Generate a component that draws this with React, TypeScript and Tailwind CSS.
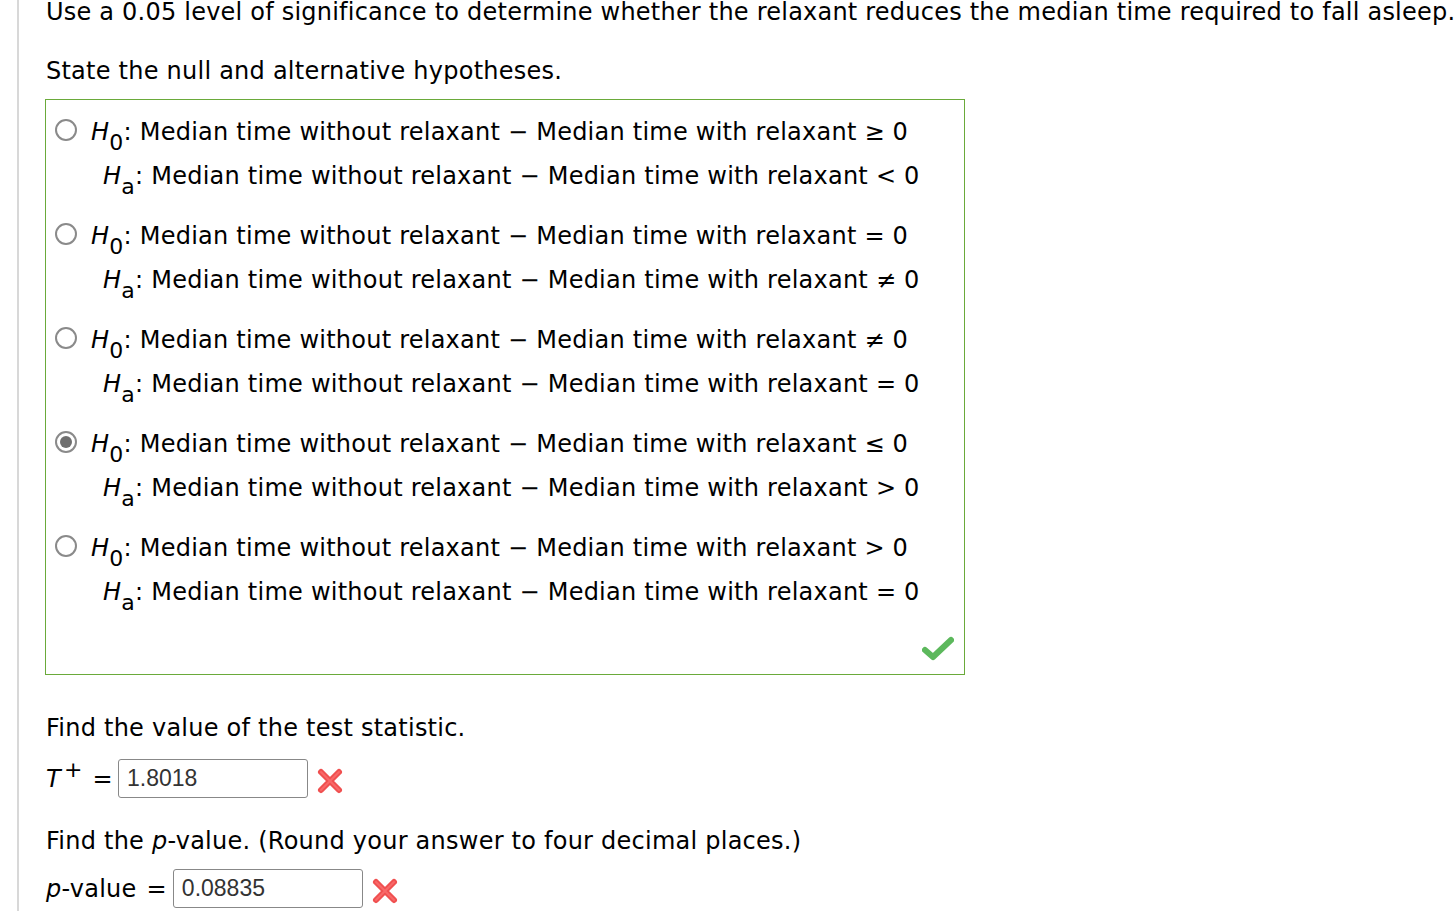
import React from "react";

const font = { fontFamily: '"DejaVu Sans", Verdana, sans-serif' };

type Opt = { h0: string; ha: string; selected?: boolean };

const lhs = "Median time without relaxant \u2212 Median time with relaxant";

const options: Opt[] = [
  { h0: "\u2265 0", ha: "< 0" },
  { h0: "= 0", ha: "\u2260 0" },
  { h0: "\u2260 0", ha: "= 0" },
  { h0: "\u2264 0", ha: "> 0", selected: true },
  { h0: "> 0", ha: "= 0" },
];

function Radio({ on }: { on?: boolean }) {
  return (
    <span className="flex h-[22px] w-[22px] shrink-0 items-center justify-center rounded-full border-2 border-[#8a8a8a] bg-white">
      {on && <span className="h-[12px] w-[12px] rounded-full bg-[#6f6f6f]" />}
    </span>
  );
}

function H({ sub }: { sub: string }) {
  return (
    <span>
      <i>H</i>
      <span className="relative top-[10px] text-[22px]">{sub}</span>
    </span>
  );
}

function RedX() {
  return (
    <svg width="28" height="28" viewBox="0 0 28 28">
      <path d="M5 5 L23 23 M23 5 L5 23" stroke="#f05050" strokeWidth="6" strokeLinecap="round" />
      <path d="M5 5 L23 23 M23 5 L5 23" stroke="#ff7a7a" strokeWidth="2" strokeLinecap="round" opacity="0.6" />
    </svg>
  );
}

function Check() {
  return (
    <svg width="32" height="26" viewBox="0 0 32 26">
      <path d="M3 14 L11 21 L29 4" fill="none" stroke="#5cb85c" strokeWidth="6" strokeLinecap="round" strokeLinejoin="round" />
    </svg>
  );
}

export default function App() {
  return (
    <div className="min-h-[914px] w-[1456px] overflow-hidden bg-white text-black" style={font}>
      <div className="ml-[17px] min-h-[914px] border-l-2 border-[#d8d8d8] pl-[27px] text-[24px] tracking-[0.24px]">
        <p className="-mt-[3px] whitespace-nowrap leading-[30px] tracking-[0.22px]">
          Use a 0.05 level of significance to determine whether the relaxant reduces the median time required to fall asleep.
        </p>
        <p className="mt-[29px] leading-[30px]">State the null and alternative hypotheses.</p>

        <div className="-ml-[1px] mt-[13px] w-[920px] border border-[#6aaa3a] pb-[12px] pl-[9px] pt-[10px]">
          <div className="flex flex-col gap-[16px]">
            {options.map((o, i) => (
              <div key={i} className="flex flex-col">
                <div className="flex h-[44px] items-center whitespace-nowrap">
                  <div className="-mt-[4px]">
                    <Radio on={o.selected} />
                  </div>
                  <span className="ml-[14px]">
                    <H sub="0" />: {lhs} {o.h0}
                  </span>
                </div>
                <div className="flex h-[44px] items-center whitespace-nowrap pl-[48px]">
                  <span>
                    <H sub="a" />: {lhs} {o.ha}
                  </span>
                </div>
              </div>
            ))}
          </div>
          <div className="flex justify-end pr-[10px] pt-[22px]">
            <Check />
          </div>
        </div>

        <p className="mt-[38px] leading-[30px]">Find the value of the test statistic.</p>
        <div className="mt-[16px] flex items-center">
          <span className="whitespace-nowrap">
            <i>T</i>
            <span className="relative -top-[10px] ml-[3px] text-[22px]">+</span>
          </span>
          <span className="ml-[10px]">=</span>
          <div
            className="ml-[5px] flex h-[39px] w-[190px] items-center rounded-[3px] border border-[#888] px-[8px] text-[23px] tracking-normal text-[#333]"
            style={{ fontFamily: '"Liberation Sans", Arial, sans-serif' }}
          >
            1.8018
          </div>
          <span className="ml-[8px] mt-[4px]">
            <RedX />
          </span>
        </div>

        <p className="mt-[28px] leading-[30px]">
          Find the <i>p</i>-value. (Round your answer to four decimal places.)
        </p>
        <div className="mt-[13px] flex items-center">
          <span className="whitespace-nowrap">
            <i>p</i>-value
          </span>
          <span className="ml-[10px]">=</span>
          <div
            className="ml-[6px] flex h-[39px] w-[190px] items-center rounded-[3px] border border-[#888] px-[8px] text-[23px] tracking-normal text-[#333]"
            style={{ fontFamily: '"Liberation Sans", Arial, sans-serif' }}
          >
            0.08835
          </div>
          <span className="ml-[8px] mt-[4px]">
            <RedX />
          </span>
        </div>
      </div>
    </div>
  );
}
